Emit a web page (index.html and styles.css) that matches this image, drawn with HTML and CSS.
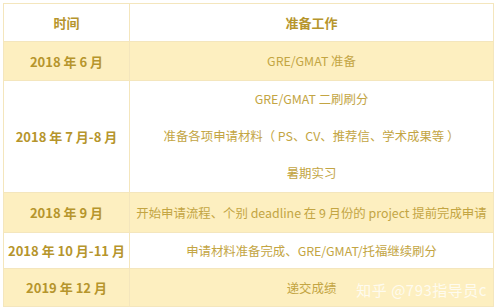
FILE: index.html
```html
<!DOCTYPE html>
<html lang="zh">
  <head>
    <meta charset="UTF-8" />
    <meta name="viewport" content="width=device-width, initial-scale=1.0" />
    <title>申请时间规划</title>
    <link rel="stylesheet" href="styles.css">
  </head>
  <body>
    <div class="wrap">
      <table class="plan">
        <colgroup>
          <col class="c1" />
          <col />
        </colgroup>
        <tr class="head">
          <th class="time">时间</th>
          <th>准备工作</th>
        </tr>
        <tr class="hl h39">
          <td class="time">2018 年 6 月</td>
          <td>GRE/GMAT 准备</td>
        </tr>
        <tr class="tall">
          <td class="time">2018 年 7 月-8 月</td>
          <td>
            <div class="lines">
              <div>GRE/GMAT 二刷刷分</div>
              <div>准备各项申请材料（ PS、CV、推荐信、学术成果等 ）</div>
              <div>暑期实习</div>
            </div>
          </td>
        </tr>
        <tr class="hl h40">
          <td class="time">2018 年 9 月</td>
          <td>开始申请流程、个别 deadline 在 9 月份的 project 提前完成申请</td>
        </tr>
        <tr class="h36">
          <td class="time">2018 年 10 月-11 月</td>
          <td>申请材料准备完成、GRE/GMAT/托福继续刷分</td>
        </tr>
        <tr class="hl h38">
          <td class="time">2019 年 12 月</td>
          <td>递交成绩</td>
        </tr>
      </table>
      <div class="mark">知乎 @793指导员c</div>
    </div>
  </body>
</html>
```

FILE: styles.css
```css
body {
  margin: 0;
  background: #ffffff;
  font-family: "Noto Sans CJK SC", "Noto Sans", sans-serif;
}

.wrap {
  position: relative;
  padding: 3px;
  width: 491px;
}

.plan {
  width: 491px;
  table-layout: fixed;
  border-collapse: collapse;
  border: 1px solid #f4e6bd;
  font-size: 12.4px;
  color: #c3a543;
}

.c1 {
  width: 126px;
}

.plan th,
.plan td {
  border: 1px solid #f4e6bd;
  text-align: center;
  padding: 0;
  white-space: nowrap;
}

.plan th {
  height: 37px;
  color: #b6952c;
  font-weight: bold;
  font-size: 13px;
}

.plan .time {
  color: #b6952c;
  font-weight: bold;
  font-size: 13px;
}

.hl {
  background: #fdefc0;
}

.h39 td { height: 38px; }
.h40 td { height: 39px; }
.h36 td { height: 35px; }
.h38 td { height: 37px; }

.lines {
  line-height: 37px;
}

.mark {
  position: absolute;
  right: 10px;
  bottom: 10px;
  font-size: 15px;
  color: rgba(255, 255, 255, 0.75);
  letter-spacing: 0.5px;
}
```
